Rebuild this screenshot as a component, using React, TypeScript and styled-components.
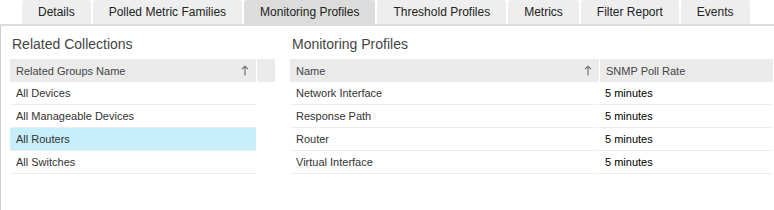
import React, { FC } from 'react';
import styled, { createGlobalStyle } from 'styled-components';

const GlobalStyle = createGlobalStyle`
  body {
    margin: 0;
    background: #ffffff;
    font-family: "Liberation Sans", Arial, sans-serif;
  }
`;

const tabs = [
  'Details',
  'Polled Metric Families',
  'Monitoring Profiles',
  'Threshold Profiles',
  'Metrics',
  'Filter Report',
  'Events',
];

const groups = ['All Devices', 'All Manageable Devices', 'All Routers', 'All Switches'];

const profiles = [
  { name: 'Network Interface', rate: '5 minutes' },
  { name: 'Response Path', rate: '5 minutes' },
  { name: 'Router', rate: '5 minutes' },
  { name: 'Virtual Interface', rate: '5 minutes' },
];

const UpArrow: FC = () => (
  <SortArrow width="8" height="11" viewBox="0 0 8 11">
    <path d="M4 1.2V10.5M1 4.2L4 1.2L7 4.2" fill="none" stroke="#666" strokeWidth="1.1" />
  </SortArrow>
);

const App: FC = () => {
  return (
    <>
      <GlobalStyle />
      <Page>
        <TabBar>
          {tabs.map((tab) => (
            <Tab key={tab} active={tab === 'Monitoring Profiles'}>
              {tab}
            </Tab>
          ))}
        </TabBar>
        <Body>
          <LeftPanel>
            <Title>Related Collections</Title>
            <GroupHeader>
              <HeadCell>
                Related Groups Name
                <UpArrow />
              </HeadCell>
              <HeadCell />
            </GroupHeader>
            <GroupList>
              {groups.map((g) => (
                <GroupRow key={g} selected={g === 'All Routers'}>
                  {g}
                </GroupRow>
              ))}
            </GroupList>
          </LeftPanel>
          <RightPanel>
            <Title>Monitoring Profiles</Title>
            <ProfileGrid>
              <HeadCell>
                Name
                <UpArrow />
              </HeadCell>
              <HeadCell>SNMP Poll Rate</HeadCell>
              {profiles.map((p) => (
                <React.Fragment key={p.name}>
                  <Cell>{p.name}</Cell>
                  <Cell strong>{p.rate}</Cell>
                </React.Fragment>
              ))}
            </ProfileGrid>
          </RightPanel>
        </Body>
      </Page>
    </>
  );
};

const Page = styled.div`
  width: 774px;
  height: 210px;
  display: flex;
  flex-direction: column;
`;

const TabBar = styled.div`
  display: flex;
  gap: 2px;
  padding-left: 22px;
  border-bottom: 2px solid #dcdcdc;
`;

const Tab = styled.div<{ active?: boolean }>`
  flex-shrink: 0;
  white-space: nowrap;
  height: 24px;
  box-sizing: border-box;
  padding: 0 16px;
  display: flex;
  align-items: center;
  justify-content: center;
  background: ${(p) => (p.active ? '#dcdcdc' : '#eeeeee')};
  border-radius: 3px 3px 0 0;
  font-size: 12px;
  color: #222222;
  cursor: pointer;
`;

const Body = styled.div`
  flex: 1;
  display: flex;
  gap: 15px;
  border-left: 1px solid #cccccc;
  padding-left: 9px;
`;

const LeftPanel = styled.div`
  width: 265px;
  display: flex;
  flex-direction: column;
`;

const RightPanel = styled.div`
  flex: 1;
  display: flex;
  flex-direction: column;
  padding-right: 1px;
`;

const Title = styled.div`
  height: 33px;
  display: flex;
  align-items: center;
  padding-left: 2px;
  padding-top: 2px;
  box-sizing: border-box;
  font-size: 14px;
  color: #444444;
`;

const GroupHeader = styled.div`
  display: grid;
  grid-template-columns: 246px 1fr;
  gap: 1px;
`;

const HeadCell = styled.div`
  position: relative;
  height: 23px;
  display: flex;
  align-items: center;
  padding-left: 6px;
  background: #ebebeb;
  font-size: 11px;
  color: #444444;
`;

const SortArrow = styled.svg`
  position: absolute;
  right: 7px;
  top: 6px;
`;

const GroupList = styled.div`
  width: 246px;
  display: flex;
  flex-direction: column;
`;

const GroupRow = styled.div<{ selected?: boolean }>`
  height: 23px;
  box-sizing: border-box;
  padding-left: 6px;
  display: flex;
  align-items: center;
  border-bottom: 1px solid #eeeeee;
  background: ${(p) => (p.selected ? '#c7eefb' : 'transparent')};
  font-size: 11px;
  color: #333333;
`;

const ProfileGrid = styled.div`
  display: grid;
  grid-template-columns: 309px 1fr;
  column-gap: 1px;
`;

const Cell = styled.div<{ strong?: boolean }>`
  height: 23px;
  box-sizing: border-box;
  padding-left: ${(p) => (p.strong ? '5px' : '6px')};
  display: flex;
  align-items: center;
  border-bottom: 1px solid #eeeeee;
  font-size: 11px;
  color: ${(p) => (p.strong ? '#000000' : '#333333')};
`;

export default App;
